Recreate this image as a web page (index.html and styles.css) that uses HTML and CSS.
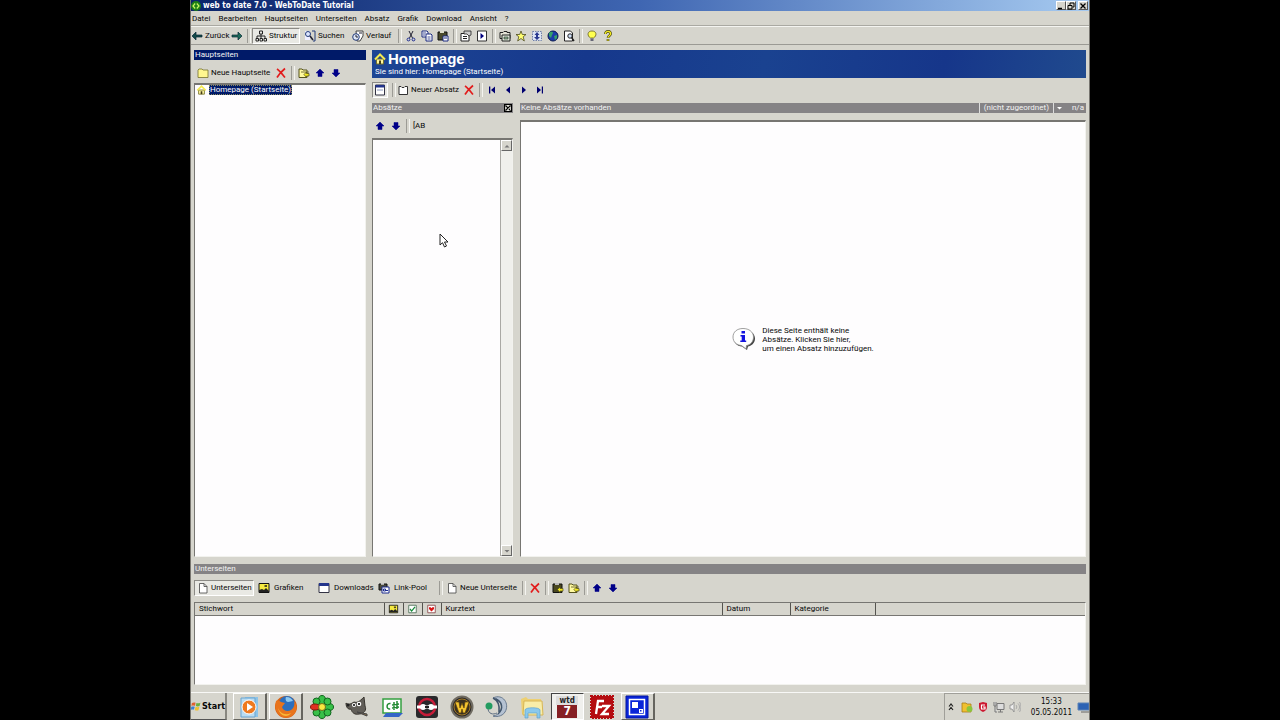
FILE: index.html
```html
<!DOCTYPE html>
<html lang="de">
<head>
<meta charset="utf-8">
<title>web to date 7.0 - WebToDate Tutorial</title>
<link rel="stylesheet" href="styles.css">
</head>
<body>
<svg class="defs" aria-hidden="true">
  <symbol id="left" viewBox="0 0 12 12"><path d="M1 6l4-4v3h6v2H5v3z" fill="#124a48" stroke="#0a2a38" stroke-width=".7"/></symbol>
  <symbol id="right" viewBox="0 0 12 12"><path d="M11 6L7 2v3H1v2h6v3z" fill="#1d6a58" stroke="#0a2a38" stroke-width=".7"/></symbol>
  <symbol id="tree" viewBox="0 0 12 12"><path d="M4.500 1h3v3h-3zM1 8.500h2.500V11H1zM5 8.500h2.500V11H5zM9 8.500h2.500V11H9zM6 4v4M2 8V6h8v2" fill="none" stroke="#222"/></symbol>
  <symbol id="search" viewBox="0 0 12 12"><path d="M1 1h5v9H1z" fill="#eef"/><circle cx="4" cy="4" r="2.500" fill="#dde6ff" stroke="#223a78"/><path d="M6 6l3 4" stroke="#223" stroke-width="1.500"/><path d="M8 1h3v10H9" fill="none" stroke="#223a78"/></symbol>
  <symbol id="history" viewBox="0 0 12 12"><path d="M4 1h7v5L8 11H5z" fill="#fff" stroke="#444"/><circle cx="4" cy="7" r="3.300" fill="#dfe8f8" stroke="#223a78"/><path d="M4 5v2h2M7 3h3" stroke="#223" fill="none"/></symbol>
  <symbol id="cut" viewBox="0 0 12 12"><path d="M4 1l3.500 7M8 1L4.500 8" stroke="#223" fill="none"/><circle cx="3.500" cy="9.500" r="1.400" fill="none" stroke="#1a2a90"/><circle cx="8.500" cy="9.500" r="1.400" fill="none" stroke="#1a2a90"/></symbol>
  <symbol id="copy" viewBox="0 0 12 12"><path d="M1 1h5l1 1v5H1z" fill="#fff" stroke="#1a2a80"/><path d="M5 4h5l1 1v6H5z" fill="#fff" stroke="#1a2a80"/><path d="M2 3h3M2 5h2M6.500 7h3M6.500 9h3" stroke="#1a2a80" stroke-width=".8"/></symbol>
  <symbol id="paste" viewBox="0 0 12 12"><path d="M1 2h9v8H1z" fill="#4a4a2c" stroke="#111"/><path d="M3 1h4v2H3z" fill="#ddc"/><path d="M6 6h5v5H6z" fill="#fff" stroke="#1a2a80"/><path d="M7 8h3" stroke="#1a2a80"/></symbol>
  <symbol id="props" viewBox="0 0 12 12"><path d="M1 3.500h8V11H1z" fill="#fff" stroke="#222"/><path d="M4 1h7v4L9 6 7 4H4z" fill="#ccc" stroke="#222" stroke-width=".8"/><path d="M3 6.500h4M3 8.500h4" stroke="#222"/></symbol>
  <symbol id="play" viewBox="0 0 12 12"><path d="M1.500 1h9v10h-9z" fill="#fff" stroke="#333"/><path d="M4.500 3L8 6 4.500 9z" fill="#000080"/></symbol>
  <symbol id="site" viewBox="0 0 12 12"><path d="M1 2.500h3l1-1h3v1h3v6H1z" fill="#e5e5d8" stroke="#222"/><path d="M3 5h8v6H3z" fill="#dde8d8" stroke="#222"/><path d="M5 7h4v2H5z" stroke="#222" stroke-width=".6" fill="#8ab890"/></symbol>
  <symbol id="star" viewBox="0 0 12 12"><path d="M6 1l1.300 3.500H11L8.200 6.800 9.300 11 6 8.500 2.700 11l1.100-4.200L1 4.500h3.700z" fill="#ffff70" stroke="#4c4a20" stroke-width=".8"/></symbol>
  <symbol id="export" viewBox="0 0 12 12"><path d="M1.500 1.500h9v9h-9z" fill="#dce4f4" stroke="#7080a8" stroke-dasharray="1.500 1"/><path d="M6 2l2.500 3H7v2h2L6 10 3 7h2V5H3.500z" fill="#2a3a90"/></symbol>
  <symbol id="globe" viewBox="0 0 12 12"><circle cx="6" cy="6" r="5" fill="#1b3caa" stroke="#081850"/><path d="M2 3c2-2 4-1 4 0L5 5 4 8 2 6zM7 6l3-1v3L8 10z" fill="#35a06a"/></symbol>
  <symbol id="preview" viewBox="0 0 12 12"><path d="M1.500 1h6l2 2v8h-8z" fill="#fff" stroke="#222"/><circle cx="7" cy="6" r="2.200" fill="#cfe0f8" stroke="#222"/><path d="M8.500 7.500L11 11" stroke="#222" stroke-width="1.500"/></symbol>
  <symbol id="bulb" viewBox="0 0 12 12"><path d="M4.500 8C1 6 1 1 6 1s5 5 1.500 7z" fill="#ffff50" stroke="#66601c" stroke-width=".8"/><path d="M4.500 8.500h3v2.500h-3z" fill="#667"/></symbol>
  <symbol id="help" viewBox="0 0 12 12"><path d="M3.400 4c0-3.500 5.200-3.500 5.200 0C8.600 5.500 6 6 6 7.800M6 9v2" fill="none" stroke="#44420c" stroke-width="2.600"/><path d="M3.400 4c0-3.500 5.200-3.500 5.200 0C8.600 5.500 6 6 6 7.500M6 9.300v1.400" fill="none" stroke="#f4ea20" stroke-width="1.300"/></symbol>
  <symbol id="folder" viewBox="0 0 12 12"><path d="M1 3l1-1h3l1 1h5v7.500H1z" fill="#fff790" stroke="#75712c" stroke-width=".8"/></symbol>
  <symbol id="foldermove" viewBox="0 0 12 12"><path d="M1 2h3l1 1h4v7.500H1z" fill="#fff9a0" stroke="#55521c"/><path d="M3 5h8M6 7.500L8.500 5v1.500H11v2.500H8.500v1.500z" fill="#f4ea20" stroke="#55521c" stroke-width=".8"/></symbol>
  <symbol id="pastemove" viewBox="0 0 12 12"><path d="M1 2h9v8.500H1z" fill="#4a4820" stroke="#111"/><path d="M3 1h4v2H3z" fill="#bbb"/><path d="M5.500 7.500L8 5v1.500h3V9H8v1.500z" fill="#f4ea20" stroke="#55521c" stroke-width=".7"/></symbol>
  <symbol id="x" viewBox="0 0 12 12"><path d="M2 2c3 2 6 6 8 8.500M10 1.500C7 4 4 7 2 10.500" fill="none" stroke="#e21c1c" stroke-width="1.700"/></symbol>
  <symbol id="up" viewBox="0 0 12 12"><path d="M6 2l4 4H8v3.500H4V6H2z" fill="#000088" stroke="#000088" stroke-width=".5"/></symbol>
  <symbol id="down" viewBox="0 0 12 12"><path d="M6 10L2 6h2V2.500h4V6h2z" fill="#000088" stroke="#000088" stroke-width=".5"/></symbol>
  <symbol id="house" viewBox="0 0 12 12"><path d="M2.500 6h7v5h-7z" fill="#fff8a0" stroke="#77722c"/><path d="M1 6.500L6 1.500l5 5" fill="none" stroke="#f4ea50" stroke-width="2"/><path d="M5 7.500h2V11H5z" fill="#443c18"/></symbol>
  <symbol id="window" viewBox="0 0 12 12"><path d="M1 1.500h10v9H1z" fill="#fff" stroke="#334"/><path d="M1 1h10v3H1z" fill="#23358c"/></symbol>
  <symbol id="list" viewBox="0 0 12 12"><path d="M1.500 1h9v10h-9z" fill="#fff" stroke="#334"/><path d="M1.500 1h9v2.500h-9z" fill="#23358c"/><path d="M3 6h6" stroke="#8894b8"/></symbol>
  <symbol id="para" viewBox="0 0 12 12"><path d="M2 2.500h2l1 1h2l1-1h2.500v8H2z" fill="#fff" stroke="#333"/></symbol>
  <symbol id="page" viewBox="0 0 12 12"><path d="M2.500 1.500H7l3 3V11H2.500z" fill="#fff" stroke="#444" stroke-width=".8"/><path d="M7 1.500v3h3" fill="none" stroke="#444" stroke-width=".8"/></symbol>
  <symbol id="first" viewBox="0 0 12 12"><path d="M9 2.500v7L5 6zM3 2.500h1.300v7H3z" fill="#000070"/></symbol>
  <symbol id="prev" viewBox="0 0 12 12"><path d="M8 2.500v7L4 6z" fill="#000070"/></symbol>
  <symbol id="next" viewBox="0 0 12 12"><path d="M4 2.500v7L8 6z" fill="#000070"/></symbol>
  <symbol id="last" viewBox="0 0 12 12"><path d="M3 2.500v7L7 6zM7.800 2.500H9v7H7.800z" fill="#000070"/></symbol>
  <symbol id="image" viewBox="0 0 12 12"><path d="M1 1.500h10v9H1z" fill="#f6ea40" stroke="#111"/><path d="M1 10V8l3-1 2 1 2-2 3 3v1z" fill="#222"/><path d="M6.500 3h2.500v2H6.500z" fill="#554c20"/></symbol>
  <symbol id="link" viewBox="0 0 12 12"><path d="M1 2h8v6H1z" fill="#4a4a3c" stroke="#111"/><path d="M3 .8h3v2H3z" fill="#ccc"/><path d="M4 5h7v6H4z" fill="#fff" stroke="#1a2a90"/><path d="M5.500 7h2v2h-2zM8 8.500h2" fill="none" stroke="#1a2a90"/></symbol>
  <symbol id="check" viewBox="0 0 12 12"><path d="M1.500 1.500h9v9h-9z" fill="#fff" stroke="#476b50"/><path d="M3 6l2 2.500 4-5" fill="none" stroke="#148a38" stroke-width="1.500"/></symbol>
  <symbol id="heart" viewBox="0 0 12 12"><path d="M1.500 1.500h9v9h-9z" fill="#fff" stroke="#844"/><path d="M6 9L3 6V4h2l1 1 1-1h2v2z" fill="#d81414"/></symbol>
</svg>

<main class="desktop">
  <header class="title">
    <svg class="logo" viewBox="0 0 10 10"><circle cx="5" cy="5" r="5" fill="#1c7d16"/><path d="M4.200 2.500L2 5l2.200 2.500M5.800 2.500L8 5 5.800 7.500" fill="none" stroke="#c8f860" stroke-width="1.200"/></svg>
    <h1>web to date 7.0 - WebToDate Tutorial</h1>
    <div class="winbtns">
      <button aria-label="Minimieren"><svg viewBox="0 0 8 8"><path d="M1 6.500h4" stroke="#000" stroke-width="1.500"/></svg></button>
      <button aria-label="Wiederherstellen"><svg viewBox="0 0 8 8"><path d="M3 1h4v4H5.500M1 3.500h4V7H1zM3 1v2" fill="none" stroke="#000"/></svg></button>
      <button class="close" aria-label="Schließen"><svg viewBox="0 0 8 8"><path d="M1.500 1.500l5 5M6.500 1.500l-5 5" stroke="#000" stroke-width="1.300"/></svg></button>
    </div>
  </header>

  <nav class="menu">
    <button>Datei</button><button>Bearbeiten</button><button>Hauptseiten</button><button>Unterseiten</button><button>Absatz</button><button>Grafik</button><button>Download</button><button>Ansicht</button><button>?</button>
  </nav>

  <div class="bar mainbar">
    <button class="w40"><svg class="i"><use href="#left"/></svg>Zurück</button>
    <button class="ib" aria-label="Vorwärts"><svg class="i"><use href="#right"/></svg></button>
    <i class="sep"></i>
    <button class="pressed w48"><svg class="i"><use href="#tree"/></svg>Struktur</button>
    <button class="w48 pad"><svg class="i"><use href="#search"/></svg>Suchen</button>
    <button class="w48 pad"><svg class="i"><use href="#history"/></svg>Verlauf</button>
    <i class="sep"></i>
    <button class="ib" aria-label="Ausschneiden"><svg class="i"><use href="#cut"/></svg></button>
    <button class="ib" aria-label="Kopieren"><svg class="i"><use href="#copy"/></svg></button>
    <button class="ib" aria-label="Einfügen"><svg class="i"><use href="#paste"/></svg></button>
    <i class="sep"></i>
    <button class="ib" aria-label="Eigenschaften"><svg class="i"><use href="#props"/></svg></button>
    <button class="ib" aria-label="Abspielen"><svg class="i"><use href="#play"/></svg></button>
    <i class="sep"></i>
    <button class="ib" aria-label="Website"><svg class="i"><use href="#site"/></svg></button>
    <button class="ib" aria-label="Design"><svg class="i"><use href="#star"/></svg></button>
    <button class="ib" aria-label="Exportieren"><svg class="i"><use href="#export"/></svg></button>
    <button class="ib" aria-label="Veröffentlichen"><svg class="i"><use href="#globe"/></svg></button>
    <button class="ib" aria-label="Vorschau"><svg class="i"><use href="#preview"/></svg></button>
    <i class="sep"></i>
    <button class="ib" aria-label="Tipps"><svg class="i"><use href="#bulb"/></svg></button>
    <button class="ib" aria-label="Hilfe"><svg class="i"><use href="#help"/></svg></button>
  </div>

  <div class="work">
    <section class="left">
      <h2 class="cap active">Hauptseiten</h2>
      <div class="bar leftbar">
        <button class="w76"><svg class="i"><use href="#folder"/></svg>Neue Hauptseite</button>
        <button class="ib" aria-label="Löschen"><svg class="i"><use href="#x"/></svg></button>
        <i class="sep"></i>
        <button class="ib" aria-label="Verschieben"><svg class="i"><use href="#foldermove"/></svg></button>
        <button class="ib" aria-label="Nach oben"><svg class="i"><use href="#up"/></svg></button>
        <button class="ib" aria-label="Nach unten"><svg class="i"><use href="#down"/></svg></button>
      </div>
      <div class="well tree">
        <svg><use href="#house"/></svg><button class="selected">Homepage (Startseite)</button>
      </div>
    </section>

    <section class="right">
      <header class="hero">
        <svg class="i"><use href="#house"/></svg>
        <h2>Homepage</h2>
        <p>Sie sind hier: Homepage (Startseite)</p>
      </header>
      <div class="bar herobar">
        <button class="ib pressed" aria-label="Absatzliste"><svg class="i"><use href="#list"/></svg></button>
        <i class="sep wide"></i>
        <button class="w64"><svg class="i"><use href="#para"/></svg>Neuer Absatz</button>
        <button class="ib" aria-label="Löschen"><svg class="i"><use href="#x"/></svg></button>
        <i class="sep"></i>
        <button class="ib" aria-label="Erster"><svg class="i"><use href="#first"/></svg></button>
        <button class="ib" aria-label="Vorheriger"><svg class="i"><use href="#prev"/></svg></button>
        <button class="ib" aria-label="Nächster"><svg class="i"><use href="#next"/></svg></button>
        <button class="ib" aria-label="Letzter"><svg class="i"><use href="#last"/></svg></button>
      </div>
      <div class="split">
        <section class="paras">
          <h3 class="cap">Absätze<button class="capx" aria-label="Schließen"><svg viewBox="0 0 8 8"><path d="M1.500 1.500l5 5M6.500 1.500l-5 5M.5.500h7v7h-7z" fill="none" stroke="#000" stroke-width="1.200"/></svg></button></h3>
          <div class="bar parabar">
            <button class="ib" aria-label="Nach oben"><svg class="i"><use href="#up"/></svg></button>
            <button class="ib" aria-label="Nach unten"><svg class="i"><use href="#down"/></svg></button>
            <i class="sep"></i>
            <button class="ab">[AB</button>
          </div>
          <div class="well paralist">
            <svg class="cursor" viewBox="0 0 10 16"><path d="M1 1v11l2.500-2.300L5.500 14l2-1-2-4H9z" fill="#fff" stroke="#222"/></svg>
            <div class="scroll">
              <button aria-label="Nach oben blättern"><svg viewBox="0 0 8 8"><path d="M1.500 5.500L4 3l2.500 2.500z" fill="#777"/></svg></button>
              <button aria-label="Nach unten blättern"><svg viewBox="0 0 8 8"><path d="M1.500 3L4 5.500 6.500 3z" fill="#777"/></svg></button>
            </div>
          </div>
        </section>
        <section class="content">
          <h3 class="cap"><span class="grow">Keine Absätze vorhanden</span><span class="cell">(nicht zugeordnet)</span><span class="cell last"><svg viewBox="0 0 8 8"><path d="M1 3h5L3.500 5.500z" fill="#fff"/></svg>n/a</span></h3>
          <div class="well empty">
            <svg class="bubble" viewBox="0 0 24 24"><path d="M12 3c6 0 11 3.500 11 8.500S19 19 16 19.500L15 23l-5-3.500C5 19 2 16 2 11.500S6 3 12 3z" fill="#444"/><path d="M11 1.500c6 0 10.500 3.500 10.500 8.500S18 18 14.500 18.500L14 22l-4.500-3.500C4.500 18 1 15 1 10s4-8.500 10-8.500z" fill="#fff" stroke="#888" stroke-width=".8"/><path d="M9.500 4H13v2.500H9.500zM8.500 8H13v5.500h1.200V15H8.300v-1.500h1.400v-4H8.500z" fill="#1414e0"/></svg>
            <p>Diese Seite enthält keine<br>Absätze. Klicken Sie hier,<br>um einen Absatz hinzuzufügen.</p>
          </div>
        </section>
      </div>
    </section>
  </div>

  <section class="lower">
    <h2 class="cap">Unterseiten</h2>
    <div class="bar lowbar">
      <button class="pressed w60"><svg class="i"><use href="#page"/></svg>Unterseiten</button>
      <button class="w60"><svg class="i gap"><use href="#image"/></svg>Grafiken</button>
      <button class="w60"><svg class="i gap"><use href="#window"/></svg>Downloads</button>
      <button class="w56"><svg class="i gap"><use href="#link"/></svg>Link-Pool</button>
      <i class="sep"></i>
      <button class="w76"><svg class="i"><use href="#page"/></svg>Neue Unterseite</button>
      <i class="sep"></i>
      <button class="ib" aria-label="Löschen"><svg class="i"><use href="#x"/></svg></button>
      <i class="sep"></i>
      <button class="ib" aria-label="Einfügen"><svg class="i"><use href="#pastemove"/></svg></button>
      <button class="ib" aria-label="Verschieben"><svg class="i"><use href="#foldermove"/></svg></button>
      <i class="sep"></i>
      <button class="ib" aria-label="Nach oben"><svg class="i"><use href="#up"/></svg></button>
      <button class="ib" aria-label="Nach unten"><svg class="i"><use href="#down"/></svg></button>
    </div>
    <div class="well tablewell">
      <table>
        <colgroup><col class="c-key"><col class="c-ico"><col class="c-ico"><col class="c-ico"><col class="c-text"><col class="c-date"><col class="c-cat"><col></colgroup>
        <thead><tr>
          <th>Stichwort</th>
          <th class="ico"><svg class="i"><use href="#image"/></svg></th>
          <th class="ico"><svg class="i"><use href="#check"/></svg></th>
          <th class="ico"><svg class="i"><use href="#heart"/></svg></th>
          <th>Kurztext</th><th>Datum</th><th>Kategorie</th><th></th>
        </tr></thead>
      </table>
    </div>
  </section>

  <footer class="taskbar">
    <button class="start"><svg viewBox="0 0 12 12"><path d="M1 2.500c2-1 3-1 4.500-.3L4.700 6C3.500 5.300 2 5.300.5 6z" fill="#e06030"/><path d="M6.500 2.300c2 .8 3 .6 4.800-.3l-1 4c-1.500.7-3 .8-4.500 0z" fill="#6ab040"/><path d="M.3 7c1.500-.8 3-.6 4.200 0l-1 3.500C2.500 10 1 10-.3 10.800z" fill="#4080d0"/><path d="M5.500 7c1.500.8 3 .7 4.500 0l-1 4c-1.500.6-3 .5-4.500-.3z" fill="#f0c030"/></svg>Start</button>
    <div class="tasks">
      <button class="raised" aria-label="Media Player"><svg viewBox="0 0 24 24"><path d="M7 2h13v20H7z" fill="#8dc4e8"/><path d="M3 3h14v19H3z" fill="#b9dcf2" stroke="#6ba4cf"/><circle cx="11" cy="12" r="7" fill="#ee7a20" stroke="#fff"/><path d="M9 8l6 4-6 4z" fill="#fff"/></svg></button>
      <button class="raised" aria-label="Firefox"><svg viewBox="0 0 24 24"><circle cx="12" cy="12" r="11" fill="#d9600f"/><circle cx="13" cy="9" r="8" fill="#2c6fbe"/><path d="M12 2c4 0 6 2 7 4-2 0-3 1-5 1s-3-3-2-5z" fill="#8fcaf0"/><path d="M2 6c2-1 4 0 5 1l4 1-3 4c1 4 6 5 9 3 3-2 4-5 3-9 4 5 3 11-1 14-6 5-14 2-16-3-2-3-2-7-1-11z" fill="#e8741c"/><path d="M4 13c2 5 7 8 13 5-3 5-11 4-13-5z" fill="#f8b838"/></svg></button>
      <button aria-label="ICQ"><svg viewBox="0 0 24 24"><g fill="#38c048" stroke="#10651d"><ellipse cx="12" cy="5" rx="3.500" ry="4.500"/><ellipse cx="12" cy="19" rx="3.500" ry="4.500"/><ellipse cx="19" cy="12" rx="4.500" ry="3.500"/><circle cx="17.500" cy="6.500" r="3.500"/><circle cx="17.500" cy="17.500" r="3.500"/><circle cx="6.500" cy="6.500" r="3.500"/><circle cx="6.500" cy="17.500" r="3.500"/></g><ellipse cx="5" cy="12" rx="4.500" ry="3" fill="#e03020" stroke="#8b180c"/><circle cx="12" cy="12" r="3.500" fill="#f8e840" stroke="#70701a"/></svg></button>
      <button aria-label="GIMP"><svg viewBox="0 0 24 24"><path d="M1 8c2 2 5 1 8-1 3 1 5 0 10-5l1 9c2 4-1 8-6 8-4 1-7-1-8-5-3 1-5-2-5-6z" fill="#615e58" stroke="#38352f"/><circle cx="9" cy="10" r="2" fill="#fff"/><circle cx="14" cy="9" r="2.300" fill="#fff"/><circle cx="9" cy="10" r="1"/><circle cx="14" cy="9" r="1.100"/><path d="M12 17l10 2v2z" fill="#8e7650" stroke="#444"/><circle cx="3" cy="10" r="1.500" fill="#222"/></svg></button>
      <button aria-label="C#"><svg viewBox="0 0 24 24"><path d="M3 4h18v14H3z" fill="#fff" stroke="#35a040" stroke-width="1.500"/><path d="M6 18h17l-4 4H3z" fill="#3564c8"/><path d="M10.500 8.500c-4-1-5 6-.3 5.500M14 7v8M17 6v8M12 10l7-1M12 13l7-1" fill="none" stroke="#228a32" stroke-width="1.500"/></svg></button>
      <button aria-label="Codec"><svg viewBox="0 0 24 24"><rect x="1" y="1" width="22" height="22" rx="3" fill="#29292b"/><circle cx="12" cy="12" r="8" fill="none" stroke="#c81c38" stroke-width="2.500"/><path d="M2 12h20" stroke="#fff" stroke-width="3"/><circle cx="8" cy="12" r="3" fill="#fff"/><circle cx="16" cy="12" r="3" fill="#fff"/><path d="M10 12h4" stroke="#222" stroke-width="2"/></svg></button>
      <button aria-label="WoW"><svg viewBox="0 0 24 24"><circle cx="12" cy="12" r="10.500" fill="#2d2a29" stroke="#706c62" stroke-width="2"/><circle cx="12" cy="12" r="8" fill="#3a3020" stroke="#a37b28"/><path d="M5 7h4l1 6 2-5 2 5 1-6h4l-4 11h-2l-1-4-1 4H9z" fill="#f4c430" stroke="#604510" stroke-width=".7"/></svg></button>
      <button aria-label="TeamSpeak"><svg viewBox="0 0 24 24"><path d="M8 3c10-5 17 6 12 14-3 5-10 5-12 4 7-1 11-7 7-14-2-3-5-4-7-4z" fill="#b5c2d2" stroke="#68798e"/><path d="M8 3c4 2 7 6 6 14M11 4c6 3 8 9 2 15" fill="none" stroke="#42566c" stroke-width="1.500"/><path d="M3 13c0 6 5 7 9 5" fill="none" stroke="#5d6e82"/><circle cx="4" cy="11" r="3.500" fill="#239c60"/></svg></button>
      <button aria-label="Explorer"><svg viewBox="0 0 24 24"><path d="M1 4l5-2 2 2h13v15H2z" fill="#edd072"/><path d="M4 6h18l1 14H3z" fill="#f8eda8" stroke="#d8b654"/><path d="M5 23v-8c0-3 15-3 15 0v8h-3v-5H8v5z" fill="#8bc9ec" stroke="#62a3cf" stroke-width=".7"/></svg></button>
      <button class="current wtd" aria-label="web to date"><span>wtd</span><b>7</b></button>
      <button aria-label="FileZilla"><svg viewBox="0 0 24 24"><path d="M1 1h22v22H1z" fill="#b40c10" stroke="#b40c10" stroke-width="2" stroke-dasharray="2 1"/><path d="M6 19L8 6h6M7 12h5M12 11h7l-7 8h7" fill="none" stroke="#fff" stroke-width="2.300"/></svg></button>
      <button class="raised" aria-label="Bildschirmrekorder"><svg viewBox="0 0 24 24"><path d="M1 1h22v22H1z" fill="#0824d8" stroke="#0416a0"/><path d="M4.500 4.500h15v15h-15z" fill="none" stroke="#fff" stroke-width="1.500"/><path d="M7 7h6v6H7zM14 14h4v4h-4z" fill="#fff"/><path d="M15 15h1.500v1.500H15z" fill="#0824d8"/></svg></button>
    </div>
    <div class="tray">
      <svg viewBox="0 0 12 12"><path d="M4 5.500L6 3l2 2.500M4 9l2-2.500L8 9" fill="none" stroke="#222" stroke-width="1.200"/></svg>
      <svg viewBox="0 0 12 12"><path d="M1 2h4l1 1h4v8H1z" fill="#f0c030" stroke="#a87b18" stroke-width=".8"/><circle cx="8.500" cy="8" r="3" fill="#8bc53c"/></svg>
      <svg viewBox="0 0 12 12"><path d="M2 2l4-1 4 1v4c0 3-2 4-4 5-2-1-4-2-4-5z" fill="#cc1830"/><path d="M8 4H4.500v4H8V6H6" fill="none" stroke="#fff" stroke-width="1.200"/></svg>
      <svg viewBox="0 0 12 12"><path d="M4 2.500h7v6H4zM5 11h5M7.500 8.500V11M1 1v4h2V1M2 5v6h2" fill="#ddd" stroke="#777"/></svg>
      <svg viewBox="0 0 12 12"><path d="M1 4h2l2-3v10L3 8H1z" fill="#eee" stroke="#888" stroke-width=".8"/><path d="M7 4c1 1 1 3 0 4M9 2.500c2 2 2 5 0 7M10.500 1c2 3 2 7 0 10" fill="none" stroke="#aaa"/></svg>
      <time datetime="2011-05-05T15:33">15:33<br>05.05.2011</time>
      <button class="show" aria-label="Desktop anzeigen"><svg viewBox="0 0 12 12"><path d="M1 2h11v7H1z" fill="#2d63b4" stroke="#5d83b5"/><path d="M4 11h8" stroke="#666"/></svg></button>
    </div>
  </footer>
</main>
</body>
</html>
```
FILE: styles.css
```css
* { box-sizing: border-box; }

body {
  margin: 0;
  background: #000;
  color: #080808;
  font: 8px/10px Roboto, "DejaVu Sans Condensed", sans-serif;
}

h1, h2, h3, p { margin: 0; font-size: inherit; font-weight: normal; }

button {
  display: flex;
  align-items: center;
  padding: 0;
  border: 0;
  background: none;
  color: inherit;
  font: inherit;
  white-space: nowrap;
}

svg { display: block; flex: none; }
.defs { position: absolute; width: 0; height: 0; }
.i { width: 12px; height: 12px; }

.desktop {
  display: flex;
  flex-direction: column;
  width: 70.3125%;
  min-height: 100vh;
  margin: 0 auto;
  background: #d6d5cd;
  border-left: 1px solid #77756f;
  border-right: 1px solid #77756f;
}

/* title and menu */
.title {
  display: flex;
  align-items: center;
  height: 11px;
  background: linear-gradient(90deg, #0a246a, #3f66b2 50%, #a6caf0);
  color: #fff;
}
.logo { width: 10px; height: 10px; margin-right: 2px; }
.title h1 { flex: 1; font: bold 8px/10px "DejaVu Sans Condensed", sans-serif; }
.winbtns { display: flex; padding-right: 1px; }
.winbtns button {
  width: 10px;
  height: 9px;
  justify-content: center;
  background: #d6d5cd;
  border: 1px solid;
  border-color: #fff #555 #555 #fff;
}
.winbtns svg { width: 8px; height: 8px; }
.winbtns .close { margin-left: 2px; }

.menu {
  display: flex;
  gap: 8px;
  height: 15px;
  padding: 1px 0 0 1px;
  border-bottom: 1px solid #aaa9a2;
}

/* toolbars */
.bar { display: flex; align-items: center; }
.mainbar {
  height: 19px;
  border-top: 1px solid #f4f4f0;
  border-bottom: 1px solid #9b9a94;
}
.ib { width: 16px; height: 16px; justify-content: center; }
.sep { width: 7px; height: 14px; flex: none; }
.sep::before {
  content: "";
  display: block;
  width: 2px;
  height: 100%;
  margin-left: 2px;
  border-left: 1px solid #9c9b95;
  border-right: 1px solid #f4f4f0;
}
.bar button { gap: 2px; flex: none; }
.pressed {
  height: 16px;
  padding-left: 2px;
  background: #e9e9e4;
  border: 1px solid;
  border-color: #8b8a85 #fff #fff #8b8a85;
}
.ib.pressed { padding: 0; }
.pad { padding-left: 4px; }
.gap { margin-right: 2px; }
.w40 { width: 38px; }
.w48 { width: 48px; }
.w56 { width: 56px; }
.w60 { width: 60px; }
.w64 { width: 64px; }
.w76 { width: 76px; }

/* panels */
.work { display: flex; flex: 1; gap: 6px; padding: 5px 3px 0; }
.left { display: flex; flex-direction: column; width: 172px; }
.right { display: flex; flex-direction: column; flex: 1; min-width: 0; }
.cap {
  display: flex;
  align-items: center;
  height: 10px;
  padding-left: 1px;
  background: #858385;
  color: #f4f4f4;
}
.cap.active { background: #001a68; }
.well {
  background: #fefdfe;
  border: 1px solid;
  border-top: 2px solid #777672;
  border-color: #777672 #f2f2ee #f2f2ee #777672;
}
.leftbar { height: 23px; padding: 2px 0 0 3px; }
.tree { flex: 1; display: flex; align-items: flex-start; gap: 2px; padding: 0 1px; }
.tree svg { width: 11px; height: 10px; }
.selected {
  height: 10px;
  padding: 0 1px;
  background: #001a68;
  color: #fff;
  outline: 1px dotted #8a8a60;
  outline-offset: -1px;
}

.hero {
  display: grid;
  grid-template-columns: 14px 1fr;
  grid-template-rows: 17px 11px;
  padding: 0 2px;
  background: linear-gradient(100deg, #1d4594, #16388c 30%, #1a4290 55%, #16368a 80%, #204a8e);
  color: #fff;
}
.hero .i { margin-top: 3px; }
.hero h2 { font: bold 15px/18px "Liberation Sans", Arial, sans-serif; }
.hero p { grid-column: 1 / 3; padding-left: 1px; }
.herobar { height: 24px; margin-bottom: 1px; }
.sep.wide { width: 9px; }
.sep.wide::before { margin-left: 4px; }

.split { display: flex; flex: 1; gap: 7px; }
.paras { display: flex; flex-direction: column; width: 141px; }
.capx {
  width: 8px;
  height: 8px;
  margin: 0 1px 0 auto;
  background: #e4e3dd;
}
.capx svg, .scroll svg { width: 8px; height: 8px; }
.parabar { height: 25px; }
.ab { padding-left: 2px; }
.paralist { position: relative; flex: 1; display: flex; justify-content: flex-end; }
.scroll {
  display: flex;
  flex-direction: column;
  justify-content: space-between;
  width: 12px;
  background: #f0f0ec;
  border-left: 1px solid #aaa9a4;
}
.scroll button {
  height: 11px;
  justify-content: center;
  background: #d6d5cd;
  border: 1px solid;
  border-color: #fff #666 #666 #fff;
}
.cursor { position: absolute; left: 66px; top: 93px; width: 10px; height: 16px; }

.content { display: flex; flex-direction: column; flex: 1; }
.content .cap { margin-bottom: 7px; }
.grow { flex: 1; }
.cell { padding: 0 4px; border-left: 1px solid #ddd; }
.cell.last { display: flex; align-items: center; gap: 8px; padding: 0 2px; }
.cell svg { width: 8px; height: 8px; }
.empty { flex: 1; display: flex; align-items: center; justify-content: center; gap: 6px; }
.empty p { line-height: 9px; }
.bubble { width: 24px; height: 24px; }

/* subpages */
.lower { padding: 7px 3px 0; }
.lowbar { height: 28px; }
.lowbar .w60 + .w60 { padding-left: 4px; }
.lowbar .w56 { margin-right: 7px; padding-left: 4px; }
.lowbar .w76 { padding-left: 2px; }
.tablewell { height: 83px; border-top-width: 1px; }
table { width: 100%; border-collapse: collapse; table-layout: fixed; }
th {
  height: 12px;
  padding: 0 4px;
  background: #d6d5cd;
  border-right: 1px solid #55544f;
  border-bottom: 1px solid #777672;
  font-weight: normal;
  text-align: left;
}
th:last-child { border-right: 0; }
th.ico { padding: 0 3px; }
th .i { width: 11px; height: 10px; }
.c-key { width: 189px; }
.c-ico { width: 19px; }
.c-text { width: 281px; }
.c-date { width: 68px; }
.c-cat { width: 85px; }

/* taskbar */
.taskbar {
  display: flex;
  height: 28px;
  margin-top: 7px;
  border-top: 1px solid #f8f8f6;
  font-family: "DejaVu Sans Condensed", sans-serif;
}
.start {
  width: 36px;
  gap: 1px;
  border-right: 2px solid #888780;
  border-bottom: 1px solid #555;
  font-size: 9px;
  font-weight: bold;
}
.start svg { width: 10px; height: 12px; }
.tasks { display: flex; gap: 2px; width: 428px; padding-left: 6px; }
.tasks button { flex: 1; justify-content: center; border: 1px solid transparent; }
.tasks svg { width: 24px; height: 24px; }
.tasks .raised { border-color: #fff #66655f #66655f #fff; border-right-width: 2px; }
.tasks .current { border-color: #444 #fff #fff #444; background: #f0f0ed; }
.tasks .wtd { flex-direction: column; font-weight: bold; line-height: 9px; }
.wtd span { width: 22px; background: #ddd; color: #222; text-align: center; }
.wtd b { width: 20px; background: #862024; color: #fff; font-size: 12px; line-height: 13px; text-align: center; }
.tray {
  display: flex;
  align-items: center;
  gap: 4px;
  margin-left: auto;
  border-left: 1px solid #a09f99;
  border-top: 1px solid #a09f99;
}
.tray svg { width: 12px; height: 12px; }
.tray time { padding: 0 1px 0 6px; text-align: center; line-height: 11px; }
```
